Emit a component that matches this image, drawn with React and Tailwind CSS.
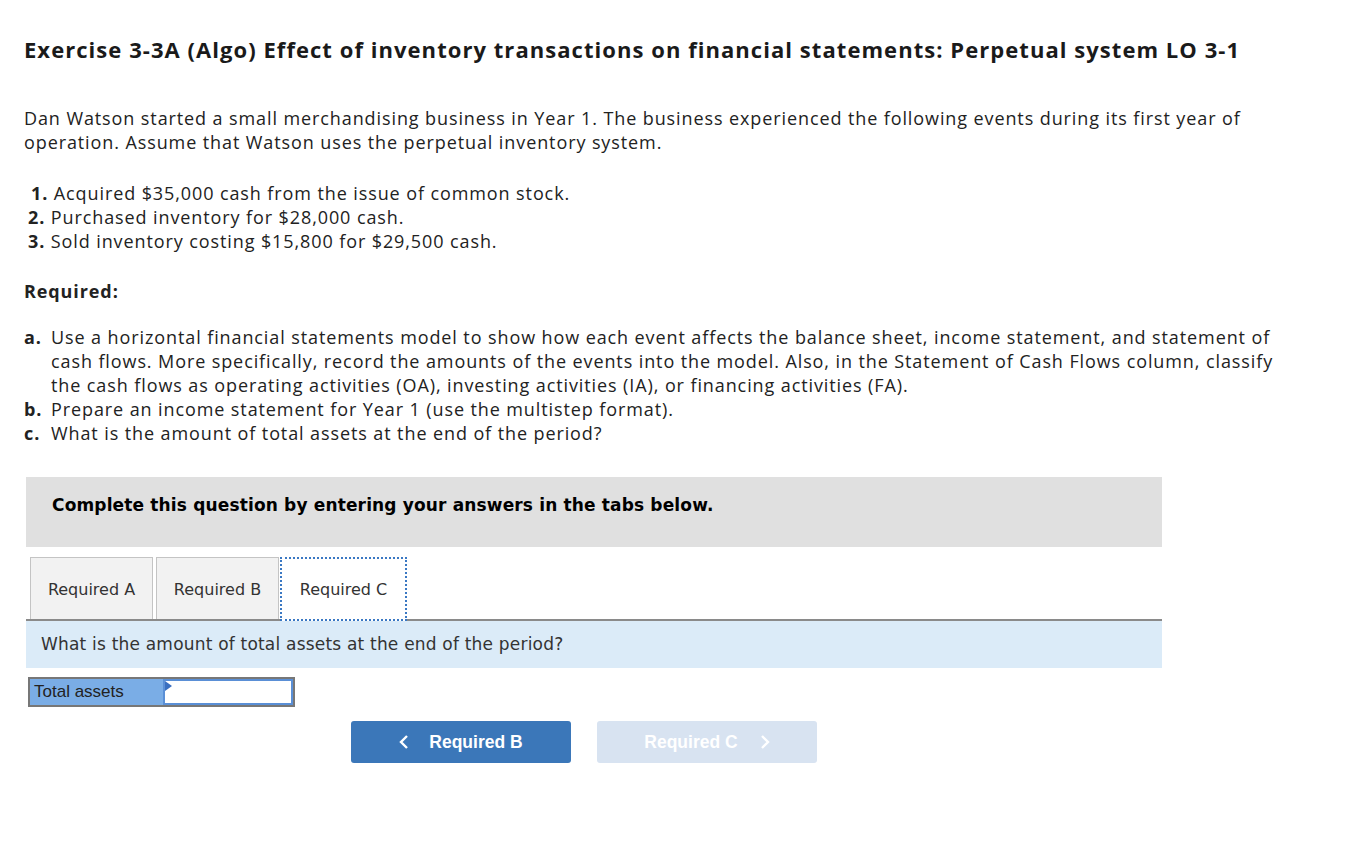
import React from "react";

const body = { fontFamily: "'Open Sans', Lato, sans-serif" };
const verdana = { fontFamily: "'DejaVu Sans', Verdana, sans-serif" };

export default function App() {
  return (
    <div className="min-h-screen bg-white text-[#222]" style={body}>
      <div className="pl-6 pt-[33px] w-[1320px] tracking-[0.9px]">
        <h1 className="text-[22px] font-bold leading-8 text-[#1a1a1a] tracking-[1.05px]">
          Exercise 3-3A (Algo) Effect of inventory transactions on financial statements: Perpetual system LO 3-1
        </h1>

        <p className="mt-[41px] text-[18px] leading-6 w-[1250px]">
          Dan Watson started a small merchandising business in Year 1. The business experienced the following events during its first year of operation. Assume that Watson uses the perpetual inventory system.
        </p>

        <ol className="mt-[27px] text-[18px] leading-6 pl-[7px]">
          <li><b>1.</b> Acquired $35,000 cash from the issue of common stock.</li>
          <li className="-ml-[3px]"><b>2.</b> Purchased inventory for $28,000 cash.</li>
          <li className="-ml-[3px]"><b>3.</b> Sold inventory costing $15,800 for $29,500 cash.</li>
        </ol>

        <p className="mt-[26px] text-[18px] leading-6 font-bold">Required:</p>

        <div className="mt-[22px] text-[18px] leading-6 w-[1280px]">
          <div className="flex">
            <b className="w-[27px] shrink-0">a.</b>
            <span>
              Use a horizontal financial statements model to show how each event affects the balance sheet, income statement, and statement of cash flows. More specifically, record the amounts of the events into the model. Also, in the Statement of Cash Flows column, classify the cash flows as operating activities (OA), investing activities (IA), or financing activities (FA).
            </span>
          </div>
          <div className="flex">
            <b className="w-[27px] shrink-0">b.</b>
            <span>Prepare an income statement for Year 1 (use the multistep format).</span>
          </div>
          <div className="flex">
            <b className="w-[27px] shrink-0">c.</b>
            <span>What is the amount of total assets at the end of the period?</span>
          </div>
        </div>
      </div>

      <div className="ml-[26px] w-[1136px] mt-[32px]">
        <div className="bg-[#e0e0e0] h-[70px] flex items-center pl-[26px] pb-[12px]" style={verdana}>
          <span className="text-[17px] font-bold text-black tracking-[0.15px]">
            Complete this question by entering your answers in the tabs below.
          </span>
        </div>

        <div className="mt-[10px] flex items-end pl-[4px] gap-[3px] border-b-2 border-[#8a8a8a]" style={verdana}>
          <div className="w-[123px] h-[62px] bg-[#f2f2f2] border border-[#c4c4c4] border-b-0 flex items-center justify-center pt-[2px] text-[16px] text-[#333]">
            Required A
          </div>
          <div className="w-[123px] h-[62px] bg-[#f2f2f2] border border-[#c4c4c4] border-b-0 flex items-center justify-center pt-[2px] text-[16px] text-[#333]">
            Required B
          </div>
          <div className="-ml-[2px] w-[127px] h-[64px] bg-white border-2 border-dotted border-[#3a78c3] -mb-[2px] flex items-center justify-center pt-[2px] text-[16px] text-[#333]">
            Required C
          </div>
        </div>

        <div className="bg-[#dbebf8] h-[47px] flex items-center pl-[15px] pt-[1px]" style={verdana}>
          <span className="text-[17px] text-[#333] tracking-[0.2px]">
            What is the amount of total assets at the end of the period?
          </span>
        </div>

        <div className="mt-[9px] ml-[2px] flex h-[30px] w-[267px] border-2 border-[#777]">
          <div
            className="w-[133px] bg-[#7aade6] flex items-center pl-[4px] text-[17px] text-[#222]"
            style={{ fontFamily: "'Liberation Sans', Arial, sans-serif" }}
          >
            Total assets
          </div>
          <div className="relative flex-1 bg-white border-2 border-[#5a8fd6]">
            <div className="absolute left-0 top-0 w-0 h-0 border-t-[5px] border-b-[5px] border-l-[7px] border-t-transparent border-b-transparent border-l-[#3a6fc0]" />
          </div>
        </div>

        <div className="mt-[14px] flex gap-[26px] pl-[325px]" style={{ fontFamily: "'Liberation Sans', Arial, sans-serif" }}>
          <button className="w-[220px] h-[42px] rounded-[3px] bg-[#3b77b9] text-white text-[17.5px] font-bold flex items-center justify-center gap-[20px]">
            <svg width="10" height="16" viewBox="0 0 10 16" fill="none" stroke="white" strokeWidth="2.4">
              <path d="M8 2 L2 8 L8 14" />
            </svg>
            Required B
          </button>
          <button className="w-[220px] h-[42px] rounded-[3px] bg-[#d8e3f1] text-white text-[17.5px] font-bold flex items-center justify-center gap-[22px]">
            Required C
            <svg width="10" height="16" viewBox="0 0 10 16" fill="none" stroke="white" strokeWidth="2.4">
              <path d="M2 2 L8 8 L2 14" />
            </svg>
          </button>
        </div>
      </div>
    </div>
  );
}
